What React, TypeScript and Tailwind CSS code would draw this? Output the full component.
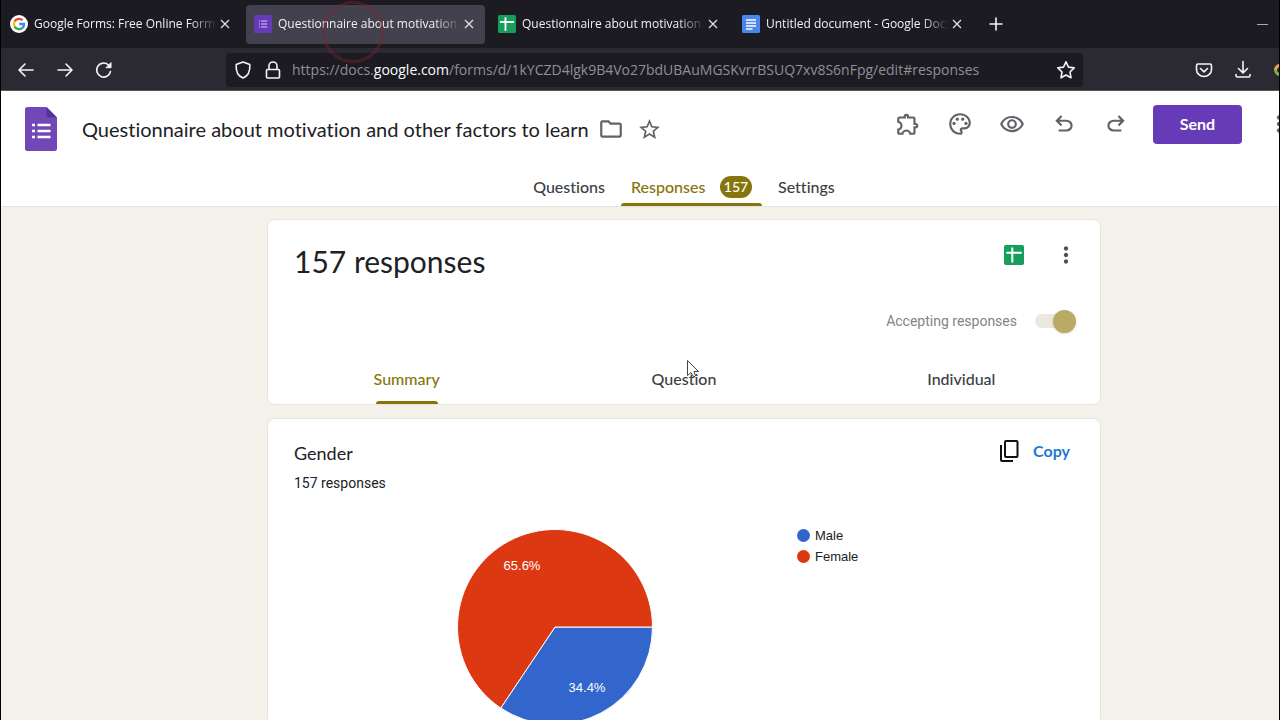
import type { ReactNode } from "react";
import { MdMoreVert, MdOutlineExtension, MdOutlineFolder, MdOutlinePalette, MdOutlineRemoveRedEye, MdStarBorder } from "react-icons/md";

function GoogleIcon() {
  return (
    <svg viewBox="0 0 18 18" className="size-[18px]" aria-hidden="true">
      <circle cx="9" cy="9" r="9" fill="#fff" />
      <g fill="none" strokeWidth="2.3">
        <path d="M12.600 5.200A5.100 5.100 0 0 0 4.600 6.500" stroke="#ea4335" />
        <path d="M4.600 6.500a5.100 5.100 0 0 0 0 5.100" stroke="#fbbc05" />
        <path d="M4.600 11.600a5.100 5.100 0 0 0 7.700 1.400" stroke="#34a853" />
        <path d="M12.300 13A5.100 5.100 0 0 0 14.100 9H9.200" stroke="#4285f4" />
      </g>
    </svg>
  );
}

function FormsTabIcon() {
  return (
    <svg viewBox="0 0 18 18" className="size-[18px]" aria-hidden="true">
      <rect width="18" height="18" rx="1.5" fill="#673ab7" />
      <path d="M7.200 6h6M7.200 9h6M7.200 12h6M5 6h1.200M5 9h1.200M5 12h1.200" stroke="#d8caf0" strokeWidth="1.200" />
    </svg>
  );
}

function SheetsIcon({ className }: { className: string }) {
  return (
    <svg viewBox="0 0 20 20" className={className} aria-hidden="true">
      <rect width="20" height="20" rx="1.8" fill="#169f5a" />
      <path d="M2.300 7.800h15.400M8.300 2.500v15" stroke="#fff" strokeWidth="2" />
    </svg>
  );
}

function DocsIcon() {
  return (
    <svg viewBox="0 0 18 18" className="size-[18px]" aria-hidden="true">
      <rect width="18" height="18" rx="1.500" fill="#4a86ee" />
      <path d="M4 5h10M4 8h10M4 11h10M4 14h6.500" stroke="#fff" strokeWidth="1.700" />
    </svg>
  );
}

function CloseIcon() {
  return (
    <svg viewBox="0 0 10 10" className="size-[10px]" fill="none" stroke="#e4e4ea" strokeWidth="1.200" aria-hidden="true">
      <path d="M1 1l8 8M9 1L1 9" />
    </svg>
  );
}

function BrowserTab({ icon, title, active = false }: { icon: ReactNode; title: string; active?: boolean }) {
  return (
    <div className={`flex h-[39px] w-[239px] shrink-0 items-center rounded pl-2 ${active ? "bg-[#42414d]" : ""}`}>
      <a href="#tab" className="flex min-w-0 items-center gap-[6px] text-[#f0f0f4]">
        <span className="shrink-0">{icon}</span>
        <span className="w-[183px] overflow-hidden text-[12px] leading-5 whitespace-nowrap [mask-image:linear-gradient(90deg,#000_85%,transparent)]">
          {title}
        </span>
      </a>
      <button type="button" aria-label={`Close ${title}`} className="flex size-4 shrink-0 items-center justify-center">
        <CloseIcon />
      </button>
    </div>
  );
}

function BarButton({ label, children }: { label: string; children: ReactNode }) {
  return (
    <button type="button" aria-label={label} className="flex size-[20px] shrink-0 items-center justify-center text-[#f4f4f8]">
      {children}
    </button>
  );
}

function Line({ children }: { children: ReactNode }) {
  return (
    <svg viewBox="0 0 20 20" className="size-[20px]" fill="none" stroke="currentColor" strokeWidth="1.600" strokeLinecap="round" strokeLinejoin="round" aria-hidden="true">
      {children}
    </svg>
  );
}

function BrowserChrome() {
  return (
    <div className="relative shrink-0 font-['Open_Sans','Noto_Sans',sans-serif]">
      <div className="flex h-12 items-center gap-[5px] overflow-hidden bg-[#1c1b22] pl-px">
        <BrowserTab icon={<GoogleIcon />} title="Google Forms: Free Online Form" />
        <BrowserTab icon={<FormsTabIcon />} title="Questionnaire about motivation" active />
        <BrowserTab icon={<SheetsIcon className="size-[18px]" />} title="Questionnaire about motivation" />
        <BrowserTab icon={<DocsIcon />} title="Untitled document - Google Docs" />
        <div className="flex flex-1 items-center justify-between pl-2">
          <BarButton label="New tab">
            <Line><path d="M10 4v12M4 10h12" /></Line>
          </BarButton>
          <button type="button" aria-label="Minimize" className="mr-[11px] h-4 w-[11px] shrink-0">
            <span className="block h-px bg-[#a9a9b0]" />
          </button>
        </div>
      </div>
      <div className="flex h-[43px] items-center overflow-hidden border-b border-[#55545c] bg-[#2b2a33] pt-[2px]">
        <div className="flex w-[225px] shrink-0 items-center gap-[19px] pl-[15px]">
          <BarButton label="Back">
            <Line><path d="M17 10H3M9 4l-6 6 6 6" /></Line>
          </BarButton>
          <BarButton label="Forward">
            <Line><path d="M3 10h14M11 4l6 6-6 6" /></Line>
          </BarButton>
          <BarButton label="Reload">
            <Line><path d="M16.500 11.500A7 7 0 1 1 14.500 5L16.500 7" /><path d="M17 3v4.700h-4.700z" fill="currentColor" strokeWidth="1" /></Line>
          </BarButton>
        </div>
        <div className="flex h-[34px] min-w-0 flex-1 items-center rounded bg-[#1c1b22] px-[7px]">
          <BarButton label="Tracking protection">
            <Line><path d="M10 2l6.800 2.600c.5 6.400-1.800 11.400-6.800 13.400C5 16 2.700 11 3.200 4.600z" /></Line>
          </BarButton>
          <span className="w-[10px] shrink-0" />
          <BarButton label="Site security">
            <Line><path d="M4.500 9.500h11a1 1 0 0 1 1 1V17a1 1 0 0 1-1 1h-11a1 1 0 0 1-1-1v-6.500a1 1 0 0 1 1-1zM6 9.500V6a4 4 0 0 1 8 0v3.500" /></Line>
          </BarButton>
          <div className="min-w-0 flex-1 overflow-hidden pl-[9px] text-[14px] leading-5 whitespace-nowrap text-[#8f8f98]">
            <a href="#responses">
              https://docs.<span className="text-[#fbfbfe]">google.com</span>/forms/d/1kYCZD4lgk9B4Vo27bdUBAuMGSKvrrBSUQ7xv8S6nFpg/edit#responses
            </a>
          </div>
          <BarButton label="Bookmark this page">
            <Line><path d="M10 1.800l2.500 5.300 5.700.8-4.200 4.100 1 5.800-5-2.800-5 2.800 1-5.800-4.200-4.100 5.700-.8z" /></Line>
          </BarButton>
        </div>
        <div className="ml-[111px] flex w-[85px] shrink-0 items-center gap-[19px]">
          <BarButton label="Save to Pocket">
            <Line><path d="M4 4h12a1.500 1.500 0 0 1 1.500 1.500V9.500a7.500 7 0 0 1-15 0V5.500A1.500 1.500 0 0 1 4 4zM6.500 8.500l3.500 3.300 3.500-3.300" /></Line>
          </BarButton>
          <BarButton label="Downloads">
            <Line><path d="M10 1.500v11M5.500 8.500l4.500 4.300 4.500-4.300M3 14.500v1A1.500 1.500 0 0 0 4.500 17h11a1.500 1.500 0 0 0 1.500-1.500v-1" /></Line>
          </BarButton>
          <svg viewBox="0 0 16 16" className="size-4 shrink-0" fill="none" strokeWidth="3" aria-hidden="true">
            <path d="M8 3.500A4.500 4.500 0 0 0 3.500 8" stroke="#e0a94a" />
            <path d="M3.500 8A4.500 4.500 0 0 0 8 12.500" stroke="#7cb342" />
          </svg>
        </div>
      </div>
      <span className="pointer-events-none absolute top-px left-[321px] size-[62px] rounded-full border-[3px] border-[#8a1f35]/40" />
    </div>
  );
}

function HeaderButton({ label, children }: { label: string; children: ReactNode }) {
  return (
    <button type="button" aria-label={label} className="flex size-[26px] shrink-0 items-center justify-center text-[#5f6368]">
      {children}
    </button>
  );
}

function FormsHeader() {
  return (
    <header className="shrink-0 overflow-hidden border-b border-[#e4e3df] bg-white text-[#202124]">
      <div className="flex h-[76px] items-center justify-between pl-6">
        <div className="flex min-w-0 items-center">
          <svg viewBox="0 0 32 44" className="h-11 w-8 shrink-0" aria-hidden="true">
            <path d="M2.500 0H21.500L32 10.500V41.500a2.500 2.500 0 0 1-2.500 2.500h-27A2.500 2.500 0 0 1 0 41.500v-39A2.500 2.500 0 0 1 2.500 0z" fill="#7248b9" />
            <path d="M21.500 0L32 10.500H24a2.500 2.500 0 0 1-2.500-2.500z" fill="#54329a" />
            <path d="M12.500 18h13M12.500 24h13M12.500 30h13M7 18h3M7 24h3M7 30h3" stroke="#fff" strokeWidth="2.600" />
          </svg>
          <h1 className="ml-[25px] truncate text-[20px] leading-7">Questionnaire about motivation and other factors to learn</h1>
          <div className="ml-[9px] flex gap-[13px]">
            <HeaderButton label="Move to folder"><MdOutlineFolder size={26} /></HeaderButton>
            <HeaderButton label="Star"><MdStarBorder size={25} /></HeaderButton>
          </div>
        </div>
        <div className="-mr-[13px] mb-[10px] flex shrink-0 items-center">
          <div className="flex gap-[26px]">
            <HeaderButton label="Add-ons"><MdOutlineExtension size={26} /></HeaderButton>
            <HeaderButton label="Customize theme"><MdOutlinePalette size={26} /></HeaderButton>
            <HeaderButton label="Preview"><MdOutlineRemoveRedEye size={26} /></HeaderButton>
            <HeaderButton label="Undo">
              <svg viewBox="0 -960 960 960" className="size-[26px]" fill="currentColor" aria-hidden="true">
                <path d="M280-200v-80h284q63 0 109.500-40T720-420q0-60-46.500-100T564-560H312l104 104-56 56-200-200 200-200 56 56-104 104h252q97 0 166.500 63T800-420q0 94-69.500 157T564-200H280Z" />
              </svg>
            </HeaderButton>
            <HeaderButton label="Redo">
              <svg viewBox="0 -960 960 960" className="size-[26px]" fill="currentColor" aria-hidden="true">
                <path d="M396-200q-97 0-166.500-63T160-420q0-94 69.500-157T396-640h252L544-744l56-56 200 200-200 200-56-56 104-104H396q-63 0-109.500 40T240-420q0 60 46.500 100T396-280h284v80H396Z" />
              </svg>
            </HeaderButton>
          </div>
          <button type="button" className="ml-6 h-[39px] w-[89px] rounded bg-[#673ab7] text-[16px] leading-5 font-bold text-white">Send</button>
          <span className="ml-6">
            <HeaderButton label="More options"><MdMoreVert size={26} /></HeaderButton>
          </span>
        </div>
      </div>
      <nav className="flex h-[39px] justify-center pl-[93px] text-[16px] leading-5 font-medium text-[#3c4043]">
        <a href="#questions" className="flex w-[98px] items-center justify-end pr-4">Questions</a>
        <a href="#responses" className="relative flex w-[141px] items-center justify-between px-[10px] text-[#86750b]">
          Responses
          <span className="flex h-[22px] w-8 items-center justify-center rounded-full bg-[#86750b] text-[14px] leading-5 text-white">157</span>
          <span className="absolute inset-x-0 bottom-0 h-[3px] rounded-t bg-[#86750b]" />
        </a>
        <a href="#settings" className="flex w-[88px] items-center pl-4">Settings</a>
      </nav>
    </header>
  );
}

const summaryTabs = ["Summary", "Question", "Individual"];

function ResponsesCard() {
  return (
    <section className="rounded-lg border border-[#e6e4dc] bg-white">
      <div className="flex items-start justify-between pt-[22px] pr-[21px] pl-[26px]">
        <h2 className="text-[30px] leading-[38px] text-[#202124]">157 responses</h2>
        <div className="flex gap-[26px]">
          <button type="button" aria-label="View in Sheets" className="flex size-[26px] items-center justify-center">
            <SheetsIcon className="size-5" />
          </button>
          <button type="button" aria-label="Response options" className="flex size-[26px] items-center justify-center text-[#4d5156]">
            <MdMoreVert size={26} />
          </button>
        </div>
      </div>
      <div className="mt-[29px] flex h-6 items-center justify-end pr-6">
        <label htmlFor="accepting" className="mr-[18px] font-['Roboto',sans-serif] text-[14px] leading-5 text-[#80848a]">Accepting responses</label>
        <input
          id="accepting"
          type="checkbox"
          role="switch"
          defaultChecked
          className="relative h-[14px] w-[41px] appearance-none rounded-full bg-[#ebe9df] before:absolute before:-top-1 before:right-0 before:size-[23px] before:rounded-full before:bg-[#baaa63] before:shadow before:content-['']"
        />
      </div>
      <div className="mt-[22px] grid h-[49px] grid-cols-3 text-[16px] leading-5 font-medium text-[#3c4043]">
        {summaryTabs.map((tab, i) => (
          <a key={tab} href="#responses" className={`relative flex justify-center pt-[14px] ${i === 0 ? "text-[#86750b]" : ""}`}>
            {tab}
            {i === 0 && <span className="absolute bottom-0 h-[3px] w-[62px] rounded-t bg-[#86750b]" />}
          </a>
        ))}
      </div>
    </section>
  );
}

function PieChart() {
  return (
    <svg viewBox="0 0 196 196" className="mt-1 size-[196px] shrink-0" role="img" aria-label="Gender: 34.4% male, 65.6% female">
      <g stroke="#fff" strokeWidth="1">
        <path d="M98 98H195.500A97.500 97.500 0 0 1 43.760 179.020Z" fill="#3266cc" />
        <path d="M98 98L43.760 179.020A97.500 97.500 0 1 1 195.500 98Z" fill="#dc3912" />
      </g>
      <g fill="#fff" fontSize="13" textAnchor="middle" fontFamily="Liberation Sans, sans-serif">
        <text x="65" y="41">65.6%</text>
        <text x="130" y="163">34.4%</text>
      </g>
    </svg>
  );
}

function GenderCard() {
  return (
    <section className="rounded-lg border border-[#e6e4dc] bg-white pr-[30px] pl-[26px]">
      <div className="flex items-start justify-between pt-5">
        <div>
          <h3 className="pt-[2px] text-[18px] leading-6 text-[#202124]">Gender</h3>
          <p className="mt-2 font-['Roboto',sans-serif] text-[14px] leading-5 text-[#202124]">157 responses</p>
        </div>
        <button type="button" className="flex items-center gap-[14px] text-[16px] leading-6 font-bold text-[#1f78d1]">
          <svg viewBox="0 0 20 24" className="h-6 w-5" fill="none" stroke="#111" strokeWidth="2" strokeLinejoin="round" aria-hidden="true">
            <rect x="6" y="2" width="12.500" height="16" rx="1" />
            <path d="M2 6v15a1 1 0 0 0 1 1h11" />
          </svg>
          Copy
        </button>
      </div>
      <div className="flex items-start pt-8 pl-[163px]">
        <PieChart />
        <ul className="ml-[144px] font-['Liberation_Sans',Arial,sans-serif] text-[13px] leading-[21px] text-[#222]">
          <li className="flex items-center gap-[5px]"><span className="size-[13px] rounded-full bg-[#3266cc]" />Male</li>
          <li className="flex items-center gap-[5px]"><span className="size-[13px] rounded-full bg-[#dc3912]" />Female</li>
        </ul>
      </div>
    </section>
  );
}

export default function App() {
  return (
    <div className="relative flex h-screen flex-col overflow-hidden border-x border-black bg-[#f3f1e9] font-['Lato',sans-serif] [font-variant-ligatures:none]">
      <BrowserChrome />
      <FormsHeader />
      <main className="min-h-0 flex-1 overflow-hidden pt-3 pl-[88px]">
        <div className="mx-auto flex max-w-[834px] flex-col gap-[13px]">
          <ResponsesCard />
          <GenderCard />
        </div>
      </main>
      <svg viewBox="0 0 14 20" className="pointer-events-none absolute top-[359px] left-[685px] h-5 w-[14px]" aria-hidden="true">
        <path d="M1.500 1.500V16.500L5 13.500L7.500 18L9.500 17L8 12.500H12.500Z" fill="#fff" fillOpacity="0.800" stroke="#444" strokeWidth="1" />
      </svg>
    </div>
  );
}
